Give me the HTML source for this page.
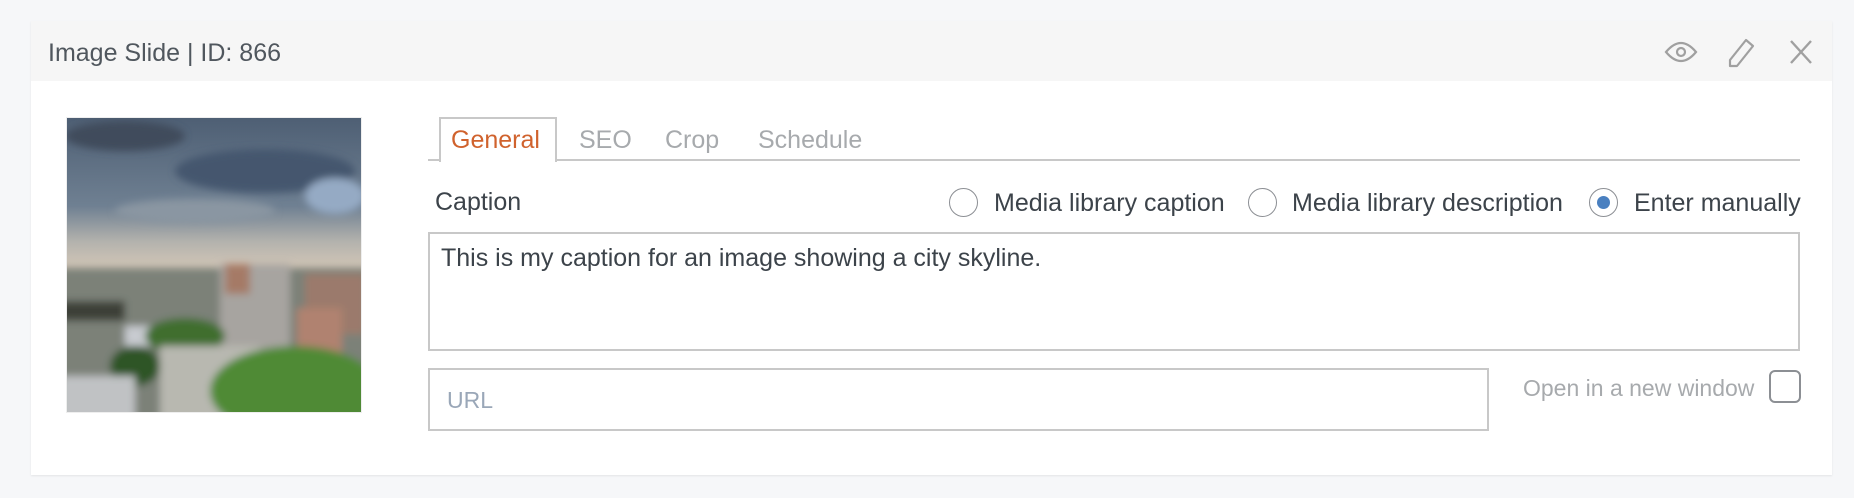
<!DOCTYPE html>
<html><head><meta charset="utf-8"><style>
html,body{margin:0;padding:0}
body{width:1854px;height:498px;background:#f6f7f9;position:relative;overflow:hidden;font-family:"Liberation Sans",Arial,sans-serif;}
.a{position:absolute;white-space:nowrap}
.card{position:absolute;left:31px;top:21px;width:1801px;height:454px;background:#fff;box-shadow:0 1px 2px rgba(0,0,0,.08)}
.hdr{position:absolute;left:31px;top:21px;width:1801px;height:60px;background:#f6f6f6}
.t{font-size:25px;line-height:30px;color:#3c434a}
.radio{position:absolute;width:27px;height:27px;border:1.5px solid #8c8f94;border-radius:50%;background:#fff}
</style></head><body>
<div class="card"></div>
<div class="hdr"></div>
<div class="a" style="left:48px;top:38px;font-size:25px;line-height:30px;color:#50575e">Image Slide | ID: 866</div>
<svg class="a" style="left:1664px;top:36px" width="34" height="32" viewBox="0 0 34 32"><path d="M2 16 Q17 -2 32 16 Q17 34 2 16Z" fill="none" stroke="#a0a0a0" stroke-width="2.2"/><circle cx="17" cy="16" r="4" fill="none" stroke="#a0a0a0" stroke-width="2.2"/></svg>
<svg class="a" style="left:1726px;top:36px" width="30" height="32" viewBox="0 0 30 32"><path d="M4 24 L20 4 L27 10 L11 30 L4 30 Z" fill="none" stroke="#a0a0a0" stroke-width="2.2" stroke-linejoin="round"/></svg>
<svg class="a" style="left:1788px;top:38px" width="26" height="28" viewBox="0 0 26 28"><path d="M3 3 L23 25 M23 3 L3 25" stroke="#a0a0a0" stroke-width="2.4"/></svg>

<svg class="a" style="left:65px;top:116px" width="298" height="298" viewBox="0 0 298 298">
<defs><linearGradient id="sky" x1="0" y1="0" x2="0" y2="1"><stop offset="0" stop-color="#4e5f74"/><stop offset=".3" stop-color="#6f8092"/><stop offset=".42" stop-color="#b3b2ad"/><stop offset=".5" stop-color="#cfc4b6"/></linearGradient>
<filter id="b"><feGaussianBlur stdDeviation="4"/></filter>
<clipPath id="c"><rect x="2" y="2" width="294" height="294"/></clipPath></defs>
<rect x="1" y="1" width="296" height="296" fill="#eee"/>
<g clip-path="url(#c)">
<rect x="2" y="2" width="294" height="294" fill="url(#sky)"/>
<g filter="url(#b)">
<ellipse cx="200" cy="55" rx="90" ry="22" fill="#44566e"/>
<ellipse cx="60" cy="20" rx="60" ry="15" fill="#3f4c5c"/>
<ellipse cx="130" cy="95" rx="80" ry="12" fill="#8a96a2"/>
<ellipse cx="270" cy="80" rx="30" ry="18" fill="#95aac4"/>
<rect x="-10" y="152" width="320" height="160" fill="#7c8178"/>
<rect x="155" y="148" width="70" height="90" fill="#a7a4a0"/>
<rect x="160" y="148" width="25" height="30" fill="#a57a66"/>
<rect x="240" y="158" width="60" height="60" fill="#9b7a6c"/>
<rect x="232" y="192" width="45" height="45" fill="#b0826f"/>
<rect x="-5" y="185" width="65" height="20" fill="#3e4038"/>
<rect x="60" y="210" width="40" height="20" fill="#c8cbd0"/>
<ellipse cx="120" cy="220" rx="40" ry="18" fill="#3f6e2d"/>
<rect x="95" y="230" width="100" height="80" fill="#b8b8b0"/>
<ellipse cx="230" cy="275" rx="85" ry="45" fill="#4f8a35"/>
<ellipse cx="70" cy="250" rx="25" ry="20" fill="#2f5427"/>
<rect x="-5" y="260" width="75" height="50" fill="#c0c2c4"/>
</g></g>
</svg>

<div class="a" style="left:428px;top:159px;width:1372px;height:2px;background:#c8c8c8"></div>
<div class="a" style="left:439px;top:117px;width:114px;height:43px;border:2px solid #c8c8c8;border-bottom:none;background:#fff"></div>
<div class="a" style="left:451px;top:125px;font-size:25px;line-height:30px;color:#d0622d">General</div>
<div class="a" style="left:579px;top:125px;font-size:25px;line-height:30px;color:#a7aaad">SEO</div>
<div class="a" style="left:665px;top:125px;font-size:25px;line-height:30px;color:#a7aaad">Crop</div>
<div class="a" style="left:758px;top:125px;font-size:25px;line-height:30px;color:#a7aaad">Schedule</div>

<div class="a t" style="left:435px;top:187px">Caption</div>
<div class="radio" style="left:949px;top:188px"></div>
<div class="a t" style="left:994px;top:188px">Media library caption</div>
<div class="radio" style="left:1248px;top:188px"></div>
<div class="a t" style="left:1292px;top:188px">Media library description</div>
<div class="radio" style="left:1589px;top:188px"><div style="position:absolute;left:7px;top:7px;width:13px;height:13px;border-radius:50%;background:#4a80c0"></div></div>
<div class="a t" style="left:1634px;top:188px">Enter manually</div>

<div class="a" style="left:428px;top:232px;width:1368px;height:115px;border:2px solid #c8c8c8"></div>
<div class="a t" style="left:441px;top:243px">This is my caption for an image showing a city skyline.</div>

<div class="a" style="left:428px;top:368px;width:1057px;height:59px;border:2px solid #c8c8c8"></div>
<div class="a" style="left:447px;top:386px;font-size:23px;line-height:28px;color:#9aa7b8">URL</div>
<div class="a" style="left:1523px;top:374px;font-size:23px;line-height:28px;color:#a7aaad">Open in a new window</div>
<div class="a" style="left:1769px;top:370px;width:28px;height:29px;border:2px solid #8c8f94;border-radius:6px;background:#fff"></div>
</body></html>
